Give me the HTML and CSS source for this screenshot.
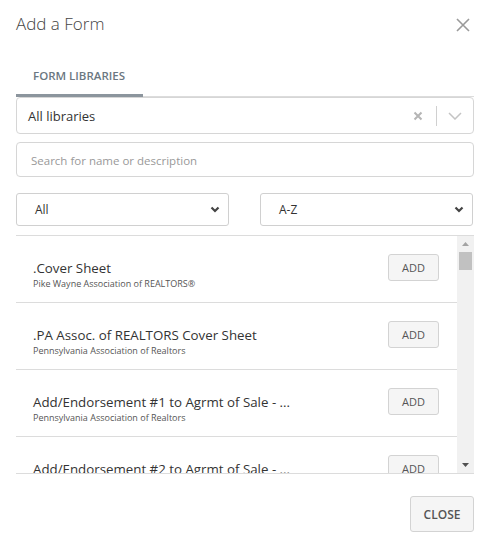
FILE: index.html
```html
<!DOCTYPE html>
<html>
<head>
<meta charset="utf-8">
<link rel="stylesheet" href="styles.css">
</head>
<body>
<div class="modal">
  <div class="header">
    <h1 class="title">Add a Form</h1>
    <svg class="close-x" width="14" height="14" viewBox="0 0 14 14"><path d="M1 1L13 13M13 1L1 13" stroke="#9a9a9a" stroke-width="1.6" fill="none"/></svg>
  </div>
  <div class="tabs">
    <div class="tab active">FORM LIBRARIES</div>
  </div>
  <div class="combo">
    <span class="combo-value">All libraries</span>
    <span class="combo-icons">
      <svg width="10" height="10" viewBox="0 0 10 10"><path d="M1.5 1.5L8.5 8.5M8.5 1.5L1.5 8.5" stroke="#b5b5b5" stroke-width="2" fill="none"/></svg>
      <span class="combo-sep"></span>
      <svg width="14" height="8" viewBox="0 0 14 8"><path d="M1 1L7 7L13 1" stroke="#c4c4c4" stroke-width="1.5" fill="none"/></svg>
    </span>
  </div>
  <div class="search">Search for name or description</div>
  <div class="filters">
    <div class="select"><span>All</span><svg width="10" height="7" viewBox="0 0 10 7"><path d="M1.5 1.5L5 5L8.5 1.5" stroke="#444" stroke-width="2.2" fill="none"/></svg></div>
    <div class="select"><span>A-Z</span><svg width="10" height="7" viewBox="0 0 10 7"><path d="M1.5 1.5L5 5L8.5 1.5" stroke="#444" stroke-width="2.2" fill="none"/></svg></div>
  </div>
  <div class="list">
    <div class="rows">
      <div class="row">
        <div class="row-text"><div class="row-title">.Cover Sheet</div><div class="row-sub">Pike Wayne Association of REALTORS®</div></div>
        <div class="add-btn">ADD</div>
      </div>
      <div class="row">
        <div class="row-text"><div class="row-title">.PA Assoc. of REALTORS Cover Sheet</div><div class="row-sub">Pennsylvania Association of Realtors</div></div>
        <div class="add-btn">ADD</div>
      </div>
      <div class="row">
        <div class="row-text"><div class="row-title">Add/Endorsement #1 to Agrmt of Sale - ...</div><div class="row-sub">Pennsylvania Association of Realtors</div></div>
        <div class="add-btn">ADD</div>
      </div>
      <div class="row">
        <div class="row-text"><div class="row-title">Add/Endorsement #2 to Agrmt of Sale - ...</div><div class="row-sub">Pennsylvania Association of Realtors</div></div>
        <div class="add-btn">ADD</div>
      </div>
    </div>
    <div class="scrollbar">
      <svg class="arrow" width="7" height="4" viewBox="0 0 7 4"><path d="M0 4L3.5 0L7 4Z" fill="#a3a3a3"/></svg>
      <div class="thumb"></div>
      <div class="track-fill"></div>
      <svg class="arrow" width="7" height="4" viewBox="0 0 7 4"><path d="M0 0L3.5 4L7 0Z" fill="#505050"/></svg>
    </div>
  </div>
  <div class="footer">
    <div class="close-btn">CLOSE</div>
  </div>
</div>
</body>
</html>
```

FILE: styles.css
```css
* { box-sizing: border-box; }
html, body { margin: 0; padding: 0; background: #fff; }
body { font-family: "Open Sans", "Noto Sans", sans-serif; color: #333; }

.modal { width: 492px; padding: 0 18px 0 16px; }

.header { display: flex; justify-content: space-between; align-items: center; height: 48px; }
.title { margin: 0; font-size: 17px; font-weight: 300; color: #444; line-height: 24px; }
.close-x { margin-right: 4px; margin-top: 1px; }

.tabs { margin-top: 9px; border-bottom: 1px solid #dcdcdc; display: flex; }
.tab { font-size: 11.5px; font-weight: 600; color: #6b7781; padding: 11px 17px 10px 17px; line-height: 16px; width: 127px; border-bottom: 3px solid #8c959d; margin-bottom: -1px; }

.combo { height: 37px; border: 1px solid #d6d6d6; border-radius: 4px; display: flex; align-items: center; justify-content: space-between; padding: 1px 11px 0 11px; }
.combo-value { font-size: 13px; color: #333; }
.combo-icons { display: flex; align-items: center; }
.combo-icons svg:first-child { margin-right: 13px; }
.combo-sep { width: 1px; height: 20px; background: #d0d0d0; margin-right: 11px; }

.search { margin-top: 8px; height: 35px; border: 1px solid #d6d6d6; border-radius: 4px; display: flex; align-items: center; padding-left: 14px; padding-top: 1px; font-size: 11.5px; color: #999; }

.filters { margin-top: 16px; display: grid; grid-template-columns: 213px 213px; column-gap: 31px; }
.select { height: 33px; border: 1px solid #d0d0d0; border-radius: 3px; display: flex; align-items: center; justify-content: space-between; padding: 0 8px 0 18px; font-size: 12px; color: #333; }

.list { margin-top: 9px; border-top: 1px solid #dcdcdc; border-bottom: 1px solid #dcdcdc; height: 239px; display: flex; }
.rows { flex: 1; overflow: hidden; }
.row { height: 67px; border-bottom: 1px solid #dcdcdc; display: flex; align-items: center; justify-content: space-between; padding: 0 18px 0 17px; }
.row-text { padding-top: 10px; }
.row-title { font-size: 13.3px; color: #333; line-height: 20px; }
.row-sub { font-size: 9px; color: #555; line-height: 12px; }
.add-btn { width: 51px; height: 27px; margin-bottom: 3px; border: 1px solid #d3d3d3; border-radius: 3px; background: #f5f5f5; font-size: 11px; color: #555; display: flex; align-items: center; justify-content: center; }

.scrollbar { width: 17px; background: #f1f1f1; display: flex; flex-direction: column; align-items: center; }
.scrollbar .arrow { margin: 6px 0; flex: none; }
.thumb { width: 13px; height: 18px; background: #c1c1c1; flex: none; }
.track-fill { flex: 1; }

.footer { margin-top: 22px; display: flex; justify-content: flex-end; }
.close-btn { width: 64px; height: 36px; border: 1px solid #d3d3d3; border-radius: 3px; background: #f5f5f5; font-size: 12px; font-weight: 600; color: #555; display: flex; align-items: center; justify-content: center; }
```
